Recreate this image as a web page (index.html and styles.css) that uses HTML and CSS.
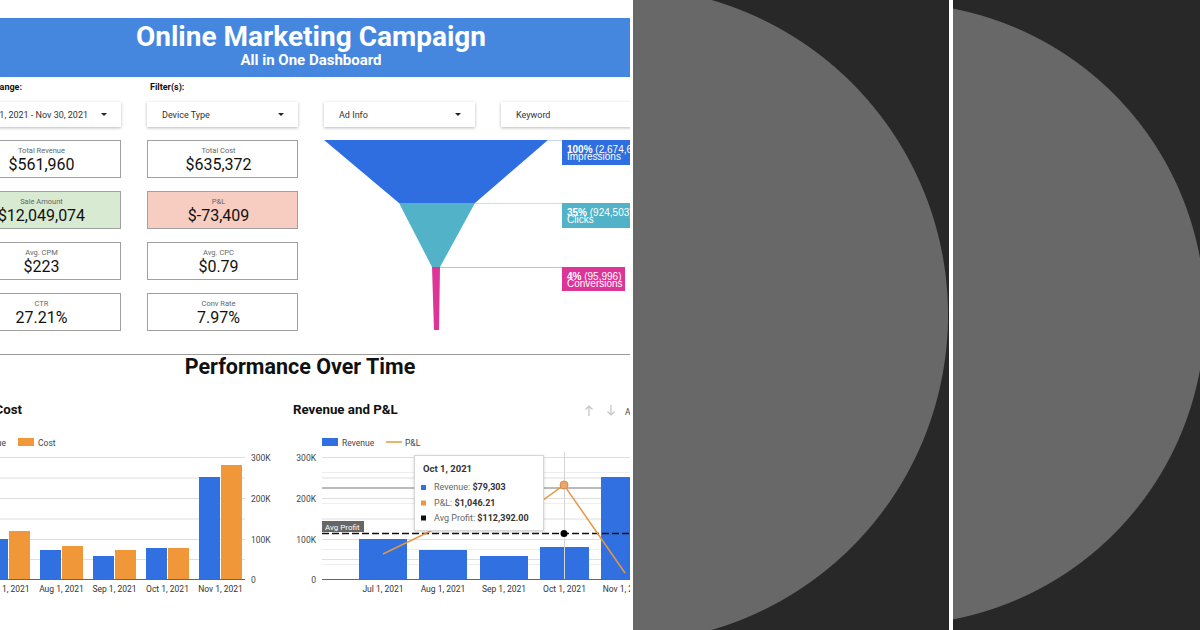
FILE: index.html
```html
<!DOCTYPE html>
<html>
<head>
<meta charset="utf-8">
<link rel="stylesheet" href="styles.css">
</head>
<body>
<div class="page">
  <div class="dash">
    <div class="dash-inner">
      <header class="banner">
        <h1 class="banner-title">Online Marketing Campaign</h1>
        <p class="banner-sub">All in One Dashboard</p>
      </header>

      <div class="control-labels">
        <span class="control-label">Date Range:</span>
        <span class="control-label">Filter(s):</span>
      </div>
      <div class="controls">
        <div class="dropdown"><span>Jul 1, 2021 - Nov 30, 2021</span><span class="caret"></span></div>
        <div class="dropdown"><span>Device Type</span><span class="caret"></span></div>
        <div class="dropdown"><span>Ad Info</span><span class="caret"></span></div>
        <div class="dropdown"><span>Keyword</span><span class="caret"></span></div>
      </div>

      <div class="overview">
        <div class="kpis">
          <div class="kpi"><div class="kpi-label">Total Revenue</div><div class="kpi-value">$561,960</div></div>
          <div class="kpi"><div class="kpi-label">Total Cost</div><div class="kpi-value">$635,372</div></div>
          <div class="kpi kpi-good"><div class="kpi-label">Sale Amount</div><div class="kpi-value">$12,049,074</div></div>
          <div class="kpi kpi-bad"><div class="kpi-label">P&amp;L</div><div class="kpi-value">$-73,409</div></div>
          <div class="kpi"><div class="kpi-label">Avg. CPM</div><div class="kpi-value">$223</div></div>
          <div class="kpi"><div class="kpi-label">Avg. CPC</div><div class="kpi-value">$0.79</div></div>
          <div class="kpi"><div class="kpi-label">CTR</div><div class="kpi-value">27.21%</div></div>
          <div class="kpi"><div class="kpi-label">Conv Rate</div><div class="kpi-value">7.97%</div></div>
        </div>

        <svg class="funnel" viewBox="324 140 306 191" width="306" height="191">
          <line x1="548" y1="140.5" x2="562" y2="140.5" class="fl-blue-line"/>
          <line x1="475" y1="203.5" x2="562" y2="203.5" class="fl-teal-line"/>
          <line x1="440" y1="267.5" x2="562" y2="267.5" class="fl-pink-line"/>
          <polygon points="324,140 548,140 475,203 399,203" class="fl-blue"/>
          <polygon points="399,203 475,203 440,267 432,267" class="fl-teal"/>
          <polygon points="432,267 440,267 439,330 434,330" class="fl-pink"/>
          <rect x="562" y="140" width="80" height="25" class="fl-blue"/>
          <rect x="562" y="203" width="80" height="25" class="fl-teal"/>
          <rect x="562" y="267" width="63" height="24" class="fl-pink"/>
          <text x="567" y="153" class="fl-text"><tspan class="fl-strong">100%</tspan> (2,674,612)</text>
          <text x="567" y="160" class="fl-text">Impressions</text>
          <text x="567" y="216" class="fl-text"><tspan class="fl-strong">35%</tspan> (924,503)</text>
          <text x="567" y="223" class="fl-text">Clicks</text>
          <text x="567" y="280" class="fl-text"><tspan class="fl-strong">4%</tspan> (95,996)</text>
          <text x="567" y="287" class="fl-text">Conversions</text>
        </svg>
      </div>

      <hr class="divider">
      <h2 class="section-title">Performance Over Time</h2>

      <div class="charts">
        <svg class="chart chart-left" viewBox="-30 379 320 221" width="320" height="221">
          <text x="22" y="414" text-anchor="end" class="ct">Revenue and Cost</text>
          <rect x="-51" y="438" width="16" height="8" class="c-blue"/>
          <text x="6" y="446" text-anchor="end" class="lg">Revenue</text>
          <rect x="18" y="438" width="16" height="8" class="c-orange"/>
          <text x="38" y="446" class="lg">Cost</text>

          <g class="grid">
            <line x1="-30" x2="245" y1="457.5" y2="457.5"/>
            <line x1="-30" x2="245" y1="478" y2="478"/>
            <line x1="-30" x2="245" y1="498.5" y2="498.5"/>
            <line x1="-30" x2="245" y1="519" y2="519"/>
            <line x1="-30" x2="245" y1="539.5" y2="539.5"/>
            <line x1="-30" x2="245" y1="559.5" y2="559.5"/>
          </g>
          <text x="251" y="461" class="ax">300K</text>
          <text x="251" y="502" class="ax">200K</text>
          <text x="251" y="543" class="ax">100K</text>
          <text x="251" y="583" class="ax">0</text>

          <rect x="-13" y="539" width="21" height="40" class="c-blue"/>
          <rect x="9" y="531" width="21" height="48" class="c-orange"/>
          <rect x="40" y="550" width="21" height="29" class="c-blue"/>
          <rect x="62" y="546" width="21" height="33" class="c-orange"/>
          <rect x="93" y="556" width="21" height="23" class="c-blue"/>
          <rect x="115" y="550" width="21" height="29" class="c-orange"/>
          <rect x="146" y="548" width="21" height="31" class="c-blue"/>
          <rect x="168" y="548" width="21" height="31" class="c-orange"/>
          <rect x="199" y="477" width="21" height="102" class="c-blue"/>
          <rect x="221" y="465" width="21" height="114" class="c-orange"/>
          <line x1="-30" x2="245" y1="579.5" y2="579.5" class="base"/>

          <text x="9" y="592" text-anchor="middle" class="xl">Jul 1, 2021</text>
          <text x="61.5" y="592" text-anchor="middle" class="xl">Aug 1, 2021</text>
          <text x="114.5" y="592" text-anchor="middle" class="xl">Sep 1, 2021</text>
          <text x="167.5" y="592" text-anchor="middle" class="xl">Oct 1, 2021</text>
          <text x="220.5" y="592" text-anchor="middle" class="xl">Nov 1, 2021</text>
        </svg>

        <svg class="chart chart-right" viewBox="290 379 340 221" width="340" height="221">
          <defs>
            <filter id="tipshadow" x="-10%" y="-10%" width="120%" height="130%">
              <feDropShadow dx="0" dy="1" stdDeviation="1.5" flood-color="#000" flood-opacity="0.18"/>
            </filter>
          </defs>
          <text x="293" y="414" class="ct">Revenue and P&amp;L</text>
          <path d="M589 416 V406 M585.5 409.5 L589 406 L592.5 409.5" class="icon"/>
          <path d="M611 405 V415 M607.5 411.5 L611 415 L614.5 411.5" class="icon"/>
          <text x="625" y="415" class="ax">A</text>

          <rect x="322" y="438" width="16" height="8" class="c-blue"/>
          <text x="342" y="446" class="lg">Revenue</text>
          <line x1="386" x2="402" y1="442" y2="442" class="pl-line"/>
          <text x="405" y="446" class="lg">P&amp;L</text>

          <g class="grid-minor">
            <line x1="322" x2="630" y1="472.5" y2="472.5"/>
            <line x1="322" x2="630" y1="503.5" y2="503.5"/>
            <line x1="322" x2="630" y1="549.5" y2="549.5"/>
            <line x1="322" x2="630" y1="564.5" y2="564.5"/>
          </g>
          <g class="grid">
            <line x1="322" x2="630" y1="457.5" y2="457.5"/>
            <line x1="322" x2="630" y1="478" y2="478"/>
            <line x1="322" x2="630" y1="498.5" y2="498.5"/>
            <line x1="322" x2="630" y1="519" y2="519"/>
            <line x1="322" x2="630" y1="539.5" y2="539.5"/>
            <line x1="322" x2="630" y1="559.5" y2="559.5"/>
          </g>
          <line x1="322" x2="630" y1="488" y2="488" class="ref"/>
          <text x="316" y="461" text-anchor="end" class="ax">300K</text>
          <text x="316" y="502" text-anchor="end" class="ax">200K</text>
          <text x="316" y="543" text-anchor="end" class="ax">100K</text>
          <text x="316" y="583" text-anchor="end" class="ax">0</text>

          <rect x="359" y="539" width="48" height="40" class="c-blue"/>
          <rect x="419" y="550" width="48" height="29" class="c-blue"/>
          <rect x="480" y="556" width="48" height="23" class="c-blue"/>
          <rect x="540" y="547" width="49" height="32" class="c-blue"/>
          <rect x="601" y="477" width="48" height="102" class="c-blue"/>
          <line x1="322" x2="630" y1="579.5" y2="579.5" class="base"/>
          <line x1="564.5" x2="564.5" y1="452" y2="579" class="hover"/>

          <line x1="322" x2="630" y1="533.5" y2="533.5" class="avg"/>
          <rect x="322" y="521" width="42" height="11" class="avg-tag"/>
          <text x="325" y="529.5" class="avg-text">Avg Profit</text>

          <polyline points="383,554 443,525 504,528 564,485 625,573" class="pl-line"/>
          <circle cx="564" cy="485" r="4" class="pl-dot"/>
          <circle cx="564" cy="533.5" r="3.5" class="avg-dot"/>

          <text x="383" y="592" text-anchor="middle" class="xl">Jul 1, 2021</text>
          <text x="443" y="592" text-anchor="middle" class="xl">Aug 1, 2021</text>
          <text x="504" y="592" text-anchor="middle" class="xl">Sep 1, 2021</text>
          <text x="564.5" y="592" text-anchor="middle" class="xl">Oct 1, 2021</text>
          <text x="625" y="592" text-anchor="middle" class="xl">Nov 1, 2021</text>

          <g class="tooltip">
            <rect x="414.5" y="455.5" width="129" height="75" class="tip-box" filter="url(#tipshadow)"/>
            <text x="423" y="472" class="tip-title">Oct 1, 2021</text>
            <rect x="421" y="485" width="5" height="5" class="c-blue"/>
            <text x="434" y="490" class="tip-row">Revenue: <tspan class="tip-val">$79,303</tspan></text>
            <rect x="421" y="500.5" width="5" height="5" class="c-orange"/>
            <text x="434" y="505.5" class="tip-row">P&amp;L: <tspan class="tip-val">$1,046.21</tspan></text>
            <rect x="421" y="515.5" width="5" height="5" class="c-black"/>
            <text x="434" y="520.5" class="tip-row">Avg Profit: <tspan class="tip-val">$112,392.00</tspan></text>
          </g>
        </svg>
      </div>
    </div>
  </div>
  <div class="panel panel-a"></div>
  <div class="panel panel-b"></div>
</div>
</body>
</html>
```

FILE: styles.css
```css
* { box-sizing: border-box; }
html, body { margin: 0; padding: 0; }
body {
  width: 1200px;
  height: 630px;
  overflow: hidden;
  background: #fff;
  font-family: Roboto, "Liberation Sans", sans-serif;
}
.page { display: flex; height: 630px; }

.dash { width: 630px; flex: none; overflow: hidden; margin-right: 3px; }
.dash-inner { width: 660px; margin-left: -30px; padding-top: 18px; }

.banner {
  margin-left: 22px;
  width: 638px;
  height: 59px;
  background: #4587de;
  color: #fff;
  text-align: center;
  padding-top: 3px;
}
.banner-title { margin: 0; font-size: 28px; line-height: 31px; font-weight: 700; }
.banner-sub { margin: 0; font-size: 15px; line-height: 17px; font-weight: 700; }

.control-labels {
  display: grid;
  grid-template-columns: repeat(4, 151px);
  column-gap: 26px;
  margin-top: 4px;
  height: 12px;
  font-size: 9px;
  line-height: 12px;
  font-weight: 700;
  color: #111;
}
.control-label { padding-left: 3px; }

.controls {
  display: grid;
  grid-template-columns: repeat(4, 151px);
  column-gap: 26px;
  margin-top: 9px;
  height: 25px;
}
.dropdown {
  background: #fff;
  box-shadow: 0 1px 3px rgba(0, 0, 0, 0.28);
  display: flex;
  align-items: center;
  justify-content: space-between;
  padding: 0 14px 0 15px;
  font-size: 9px;
  color: #333;
  white-space: nowrap;
}
.caret {
  width: 0;
  height: 0;
  border-left: 3px solid transparent;
  border-right: 3px solid transparent;
  border-top: 3px solid #222;
}

.overview {
  display: grid;
  grid-template-columns: 328px 306px;
  column-gap: 26px;
  margin-top: 13px;
  height: 191px;
}
.kpis {
  display: grid;
  grid-template-columns: 151px 151px;
  grid-auto-rows: 38px;
  column-gap: 26px;
  row-gap: 13px;
}
.kpi {
  border: 1px solid #a0a0a0;
  background: #fff;
  text-align: center;
  padding: 5px 8px 0 0;
}
.kpi-good { background: #d9ead3; }
.kpi-bad { background: #f6cdc0; }
.kpi-label { font-size: 7.5px; line-height: 10px; color: #666; }
.kpi-value { font-size: 16px; line-height: 17px; color: #111; }

.funnel { display: block; width: 306px; height: 191px; }
.fl-blue { fill: #2f6ee0; }
.fl-teal { fill: #52b2c8; }
.fl-pink { fill: #dc3597; }
.fl-blue-line { stroke: #c9d6ee; stroke-width: 1; }
.fl-teal-line { stroke: #c2e3eb; stroke-width: 1; }
.fl-pink-line { stroke: #f2a8d4; stroke-width: 1; }
.fl-text { font-family: "Liberation Sans", Arial, sans-serif; font-size: 10px; fill: #fff; }
.fl-strong { font-weight: 700; }

.divider { border: 0; border-top: 1px solid #9a9a9a; margin: 23px 0 0; height: 0; }
.section-title {
  margin: 0;
  font-size: 21.5px;
  line-height: 24px;
  font-weight: 700;
  text-align: center;
  color: #111;
}

.charts { display: flex; }
.chart { display: block; height: 221px; flex: none; }
.chart-left { width: 320px; }
.chart-right { width: 340px; }

.ct { font-family: Roboto, sans-serif; font-size: 13.3px; font-weight: 700; fill: #111; }
.lg { font-family: Roboto, sans-serif; font-size: 8.5px; fill: #444; }
.ax { font-family: Roboto, sans-serif; font-size: 8.5px; fill: #444; }
.xl { font-family: Roboto, sans-serif; font-size: 8.5px; fill: #333; }
.c-blue { fill: #3070e0; }
.c-orange { fill: #f0973a; }
.c-black { fill: #111; }
.grid line { stroke: #dedede; stroke-width: 1; }
.grid-minor line { stroke: #eeeeee; stroke-width: 1; }
.base { stroke: #666; stroke-width: 1; }
.ref { stroke: #777; stroke-width: 1; }
.hover { stroke: #d4d4d4; stroke-width: 1; }
.icon { stroke: #c4c4c4; stroke-width: 1.2; fill: none; }
.avg { stroke: #111; stroke-width: 1.5; stroke-dasharray: 7 3; }
.avg-tag { fill: #666; }
.avg-text { font-family: Roboto, sans-serif; font-size: 8px; fill: #fff; }
.pl-line { stroke: #e8973f; stroke-width: 1.5; fill: none; }
.pl-dot { fill: #eba66b; stroke: #d98a45; stroke-width: 1; }
.avg-dot { fill: #000; }
.tip-box { fill: #fff; stroke: #d6d6d6; stroke-width: 1; }
.tip-title { font-family: Roboto, sans-serif; font-size: 9.5px; font-weight: 700; fill: #333; }
.tip-row { font-family: Roboto, sans-serif; font-size: 9px; fill: #666; }
.tip-val { font-weight: 700; fill: #333; }

.panel { flex: none; height: 630px; }
.panel-a {
  width: 316px;
  margin-right: 4px;
  background: radial-gradient(circle 328px at -13px 315px, #686868 327.5px, #282828 328.5px);
}
.panel-b {
  width: 247px;
  background: radial-gradient(circle 311px at -59px 314px, #686868 310.5px, #282828 311.5px);
}
```
